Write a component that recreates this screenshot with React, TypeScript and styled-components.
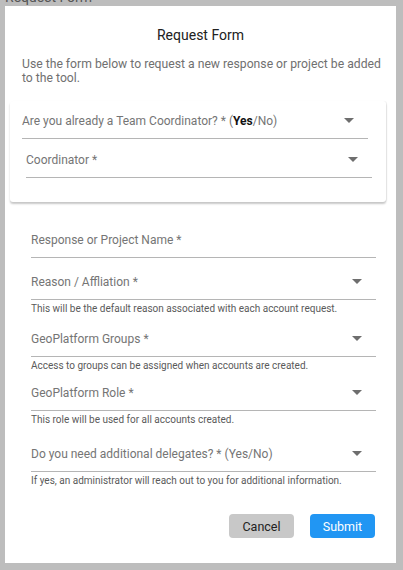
import React from 'react';
import styled, { createGlobalStyle } from 'styled-components';

const GlobalStyle = createGlobalStyle`
  html, body {
    margin: 0;
    padding: 0;
    background: #bdbdbd;
    font-family: Roboto, "Liberation Sans", Arial, sans-serif;
  }
  * { box-sizing: border-box; }
`;

const Page = styled.div`
  width: 403px;
  height: 570px;
  background: #bdbdbd;
  padding: 0 7px 0 5px;
  overflow: hidden;
`;

const BehindTitle = styled.div`
  height: 6px;
  overflow: hidden;
  span {
    display: block;
    margin-top: -11px;
    font-size: 14px;
    line-height: 16px;
    color: #555;
  }
`;

const Dialog = styled.div`
  background: #fff;
  height: 557px;
  display: flex;
  flex-direction: column;
`;

const Title = styled.h2`
  margin: 20px 0 0;
  text-align: center;
  font-size: 14px;
  line-height: 18px;
  font-weight: 400;
  color: #212121;
`;

const Intro = styled.p`
  margin: 13px 15px 0 17px;
  font-size: 12.2px;
  line-height: 14px;
  color: #707070;
`;

const Card = styled.div`
  margin: 16px 10px 0 5px;
  padding: 2px 18px 24px 12px;
  background: #fff;
  border-radius: 3px;
  box-shadow: 0 2px 2px rgba(0, 0, 0, 0.22), 1px 0 1px rgba(0, 0, 0, 0.06);
`;

const Fields = styled.div`
  margin: 20px 20px 0 26px;
  display: flex;
  flex-direction: column;
`;

const Field = styled.div<{ $top?: number; $indent?: number }>`
  margin-top: ${(p) => p.$top ?? 0}px;
  margin-left: ${(p) => p.$indent ?? 0}px;
  margin-right: ${(p) => -(p.$indent ?? 0)}px;
`;

const Row = styled.div`
  height: 36px;
  display: flex;
  align-items: center;
  justify-content: space-between;
  border-bottom: 1px solid #b5b5b5;
  padding-right: 14px;
`;

const Label = styled.span`
  font-size: 12px;
  color: #757575;
  b {
    color: #111;
    font-weight: 700;
  }
`;

const Arrow = styled.span`
  width: 0;
  height: 0;
  border-left: 5px solid transparent;
  border-right: 5px solid transparent;
  border-top: 5px solid #6e6e6e;
`;

const Helper = styled.div`
  margin-top: 3px;
  font-size: 10px;
  line-height: 12px;
  color: #5a5a5a;
`;

const Actions = styled.div`
  margin: 0 21px 0 0;
  margin-top: auto;
  margin-bottom: 25px;
  display: flex;
  justify-content: flex-end;
  gap: 16px;
`;

const Button = styled.button<{ $primary?: boolean }>`
  width: 65px;
  height: 24px;
  border: none;
  border-radius: 4px;
  font-family: Roboto, "Liberation Sans", Arial, sans-serif;
  font-size: 12.5px;
  color: ${(p) => (p.$primary ? '#fff' : '#222')};
  background: ${(p) => (p.$primary ? '#2196f3' : '#c8c8c8')};
  cursor: pointer;
`;

const SelectField = ({ label, helper, top, indent, select = true }: any) => (
  <Field $top={top} $indent={indent}>
    <Row>
      <Label>{label}</Label>
      {select && <Arrow />}
    </Row>
    {helper && <Helper>{helper}</Helper>}
  </Field>
);

export default function App() {
  return (
    <>
      <GlobalStyle />
      <Page>
        <BehindTitle>
          <span>Request Form</span>
        </BehindTitle>
        <Dialog>
          <Title>Request Form</Title>
          <Intro>Use the form below to request a new response or project be added to the tool.</Intro>
          <Card>
            <SelectField
              label={
                <>
                  Are you already a Team Coordinator? * (<b>Yes</b>/No)
                </>
              }
            />
            <SelectField label="Coordinator *" top={3} indent={4} />
          </Card>
          <Fields>
            <SelectField label="Response or Project Name *" select={false} />
            <SelectField
              label="Reason / Affliation *"
              top={6}
              helper="This will be the default reason associated with each account request."
            />
            <SelectField
              label="GeoPlatform Groups *"
              top={6}
              helper="Access to groups can be assigned when accounts are created."
            />
            <SelectField
              label="GeoPlatform Role *"
              top={3}
              helper="This role will be used for all accounts created."
            />
            <SelectField
              label="Do you need additional delegates? * (Yes/No)"
              top={10}
              helper="If yes, an administrator will reach out to you for additional information."
            />
          </Fields>
          <Actions>
            <Button>Cancel</Button>
            <Button $primary>Submit</Button>
          </Actions>
        </Dialog>
      </Page>
    </>
  );
}
